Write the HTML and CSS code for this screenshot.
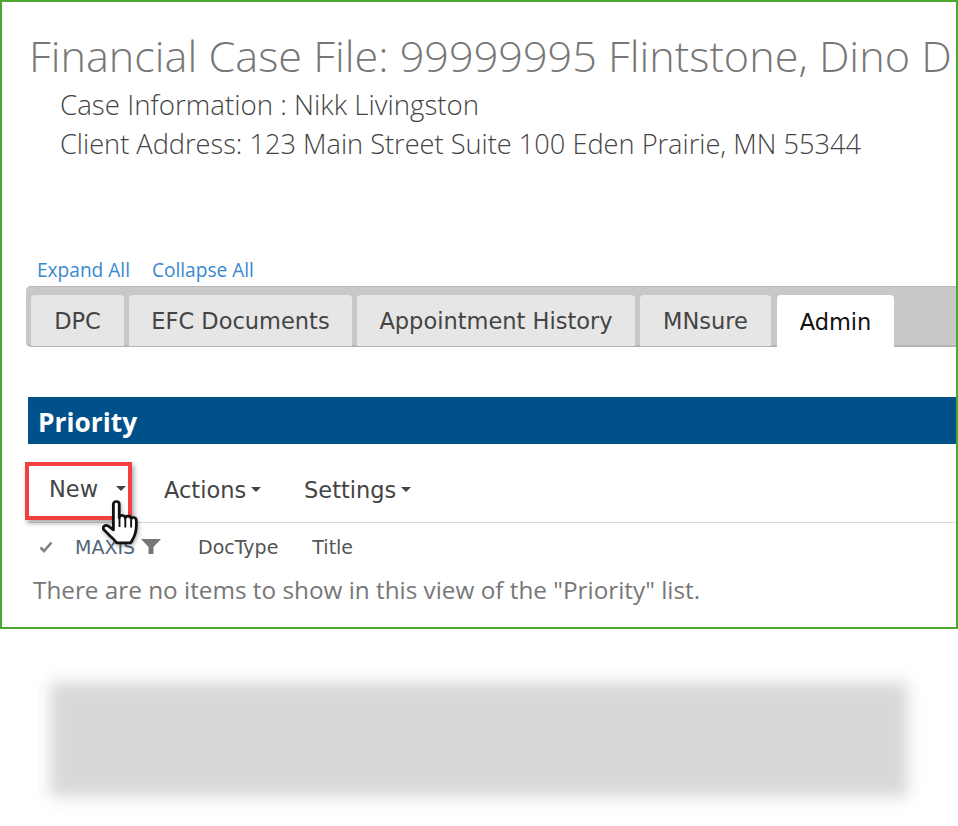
FILE: index.html
```html
<!DOCTYPE html>
<html lang="en">
<head>
<meta charset="utf-8">
<title>Financial Case File</title>
<link rel="stylesheet" href="styles.css">
</head>
<body>
<main class="frame">
  <h1 class="title">Financial Case File: 99999995 Flintstone, Dino D</h1>
  <div class="info">
    <p class="info-case">Case Information : Nikk Livingston</p>
    <p>Client Address: 123 Main Street Suite 100 Eden Prairie, MN 55344</p>
  </div>
  <div class="links"><a href="#">Expand All</a><a href="#">Collapse All</a></div>
  <nav class="tabs">
    <span class="tab tab-dpc">DPC</span>
    <span class="tab tab-efc">EFC Documents</span>
    <span class="tab tab-appt">Appointment History</span>
    <span class="tab tab-mn">MNsure</span>
    <span class="tab tab-admin">Admin</span>
  </nav>
  <h2 class="band">Priority</h2>
  <div class="toolbar">
    <span class="tool tool-new">New<i class="caret caret-new"></i></span>
    <span class="tool tool-actions">Actions<i class="caret"></i></span>
    <span class="tool">Settings<i class="caret"></i></span>
  </div>
  <div class="cols">
    <svg class="check" viewBox="0 0 14 12" width="14" height="12"><path d="M1.500 6.500 5 10 12.500 1.500" fill="none" stroke="#808080" stroke-width="2.600"/></svg>
    <span class="col-maxis">MAXIS</span>
    <svg class="funnel" viewBox="0 0 20 15" width="20" height="15"><path d="M0 0H20L12.500 8V15H7.500V8Z" fill="#777"/></svg>
    <span class="col-doc">DocType</span>
    <span>Title</span>
  </div>
  <p class="empty">There are no items to show in this view of the "Priority" list.</p>
  <div class="callout"></div>
  <svg class="hand" viewBox="0 0 30 40" width="38" height="47" preserveAspectRatio="none">
    <path d="M9 3.500c0-3 4.600-3 4.600 0V15c.4-2.600 4.600-2.500 4.800.3.500-2.300 4.300-2.100 4.600.6.700-1.700 3.800-1.300 4 1.100.3 3.800.2 8.500-.9 12-1 3.500-3 6.500-3.500 7.500H11.500c-1-2-4-4.500-6.500-7.500L1.600 25.500c-1.800-2.500 1-5 3.400-3.300L9 25.500Z" fill="#fff" stroke="#111" stroke-width="2.200" stroke-linejoin="round"/>
    <path d="M13.800 15v8M18.400 15.500v8M23 16.500v7" fill="none" stroke="#111" stroke-width="1.500"/>
  </svg>
</main>
<div class="redacted"></div>
</body>
</html>
```
FILE: styles.css
```css
* { box-sizing: border-box; }
html, body { margin: 0; padding: 0; background: #fff; }
body { width: 958px; height: 826px; overflow: hidden; font-family: "Open Sans", "Liberation Sans", sans-serif; }
p, h1, h2 { margin: 0; }
.frame { position: relative; width: 958px; height: 629px; border: 2px solid #4ea72e; overflow: hidden; padding-left: 26px; }
.title { font-size: 43.200px; font-weight: 300; line-height: 52px; color: #777; white-space: nowrap; margin: 28px 0 0 1px; }
.info { margin: 2px 0 0 32px; font-size: 27.200px; font-weight: 300; line-height: 40px; color: #444; white-space: nowrap; }
.info-case { font-size: 27.700px; }
.links { display: flex; gap: 22px; margin: 94px 0 0 9px; height: 24px; font-size: 19.100px; line-height: 24px; font-weight: 400; }
.links a { color: #3a87d0; text-decoration: none; }
.tabs { display: flex; margin: 4px -2px 0 -2px; height: 61px; padding: 8px 0 0 5px; background: #c8c8c8; border-top: 1px solid #b8b8b8; border-bottom: 2px solid #b4b4b4; border-radius: 5px 0 0 5px; }
.tab { display: flex; align-items: center; justify-content: center; height: 51px; margin-right: 5px; background: #e6e6e6; border-radius: 4px 4px 0 0; font-family: "DejaVu Sans", sans-serif; font-size: 22.500px; color: #444; white-space: nowrap; }
.tab-dpc { width: 93px; }
.tab-efc { width: 223px; }
.tab-appt { width: 278px; }
.tab-mn { width: 131px; margin-right: 6px; }
.tab-admin { width: 117px; height: 53px; background: #fff; color: #111; }
.band { margin: 50px -2px 0 0; height: 47px; background: #00508a; color: #fff; font-size: 26.300px; font-weight: 700; line-height: 51px; padding-left: 10px; }
.toolbar { display: flex; align-items: center; margin-right: -2px; height: 79px; padding: 14px 0 0 21px; border-bottom: 1px solid #d8d8d8; font-family: "DejaVu Sans", sans-serif; font-size: 22.500px; color: #444; }
.tool { display: inline-flex; align-items: center; margin-top: -1px; }
.tool-new { width: 115px; margin-top: -3px; }
.tool-actions { width: 140px; }
.caret { display: inline-block; width: 0; height: 0; margin-left: 5px; border: 5px solid transparent; border-top-color: #444; border-bottom: 0; }
.caret-new { margin-left: 18px; }
.cols { display: flex; align-items: center; height: 47px; padding-left: 11px; font-family: "DejaVu Sans", sans-serif; font-size: 19px; color: #555; white-space: nowrap; }
.check { margin-right: 22px; }
.col-maxis { width: 66px; color: #50657a; }
.funnel { margin-right: 37px; }
.col-doc { margin-right: 34px; }
.empty { margin: 0 0 0 5px; font-size: 24.300px; line-height: 40px; font-weight: 400; color: #777; white-space: nowrap; }
.callout { position: absolute; left: 23px; top: 460px; width: 107px; height: 58px; border: 4px solid #f04040; box-shadow: 2px 3px 5px rgba(0,0,0,.35); }
.hand { position: absolute; left: 100px; top: 498px; filter: drop-shadow(1px 2px 2px rgba(0,0,0,.3)); }
.redacted { width: 858px; height: 115px; margin: 53px 0 0 50px; background: #d8d8d8; filter: blur(8px); }
```
